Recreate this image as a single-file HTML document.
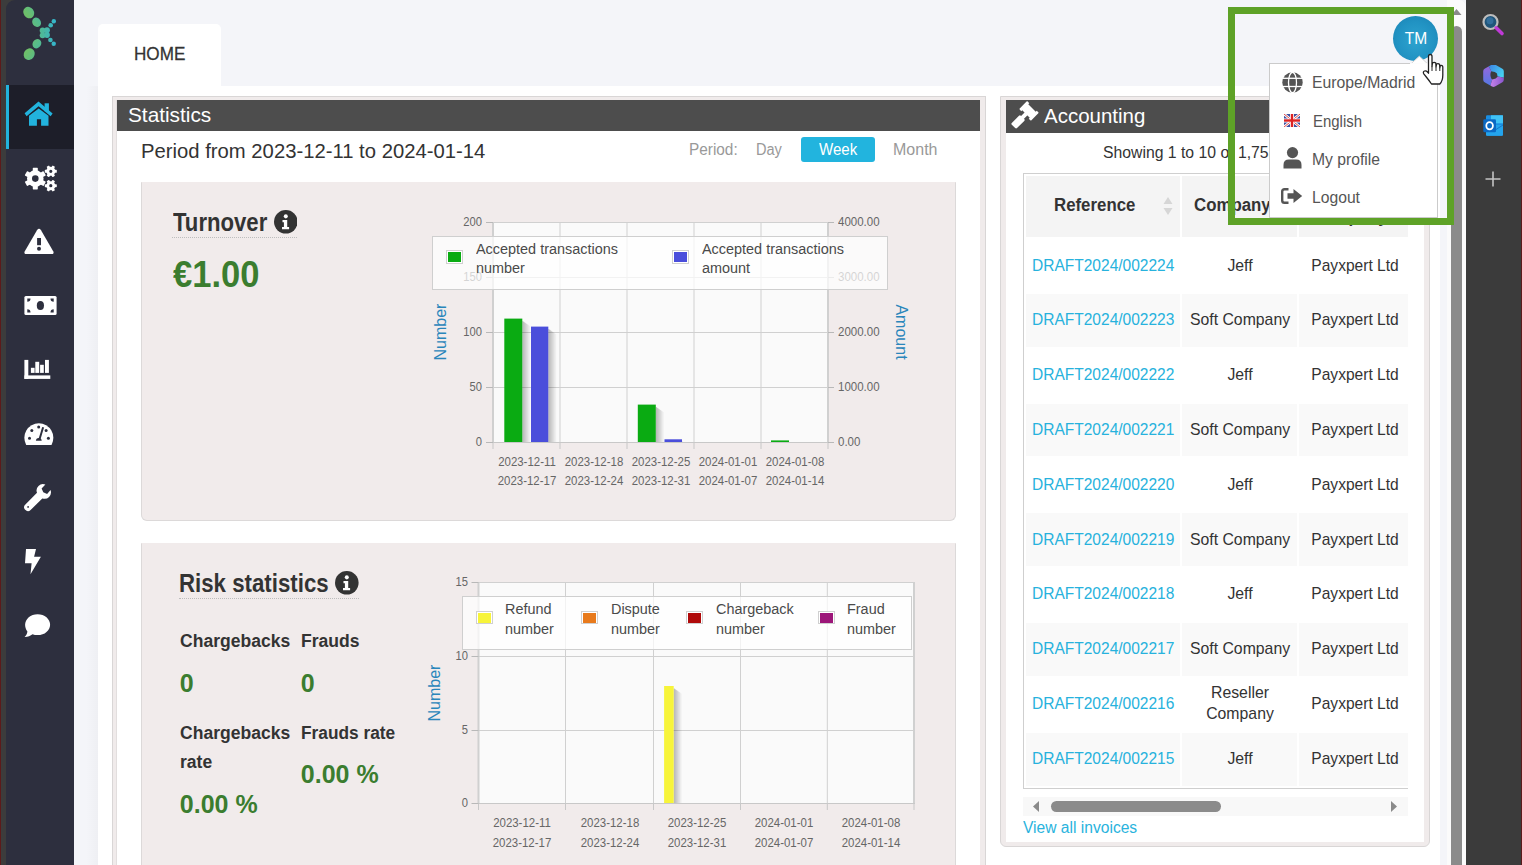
<!DOCTYPE html><html><head><meta charset="utf-8"><style>
html,body{margin:0;padding:0;}
body{width:1522px;height:865px;overflow:hidden;position:relative;background:#f4f5f9;font-family:"Liberation Sans",sans-serif;}
.t{position:absolute;white-space:nowrap;line-height:1;font-family:"Liberation Sans",sans-serif;}
div,svg{box-sizing:border-box;}
</style></head><body>
<div style="position:absolute;left:0px;top:0px;width:20px;height:865px;background:#3c3c3c"></div>
<div style="position:absolute;left:0px;top:0px;width:1px;height:865px;background:#5c1a1a"></div>
<div style="position:absolute;left:6px;top:0px;width:68px;height:865px;background:#2d2f3e;border-top-left-radius:9px"></div>
<div style="position:absolute;left:6px;top:85px;width:68px;height:64px;background:#1d1e29"></div>
<div style="position:absolute;left:6px;top:85px;width:3px;height:64px;background:#22b3dd"></div>
<svg style="position:absolute;left:0px;top:0px;" width="74" height="70" viewBox="0 0 74 70"><defs><linearGradient id="lg" gradientUnits="userSpaceOnUse" x1="26" y1="33" x2="56" y2="33">
<stop offset="0" stop-color="#6dbf6a"/><stop offset="0.55" stop-color="#4db99a"/><stop offset="1" stop-color="#33b5cf"/></linearGradient></defs>
<g fill="url(#lg)">
<ellipse cx="28.7" cy="12.6" rx="5.2" ry="6.0" transform="rotate(-35 28.7 12.6)"/>
<ellipse cx="36.6" cy="22.3" rx="4.2" ry="4.9" transform="rotate(-35 36.6 22.3)"/>
<circle cx="42.6" cy="30.5" r="2.9"/><circle cx="47.0" cy="30.2" r="2.9"/>
<circle cx="42.6" cy="35.3" r="2.9"/><circle cx="47.0" cy="35.0" r="2.9"/>
<ellipse cx="36.9" cy="43.7" rx="4.2" ry="4.9" transform="rotate(35 36.9 43.7)"/>
<ellipse cx="29.2" cy="54.1" rx="5.3" ry="6.0" transform="rotate(35 29.2 54.1)"/>
<circle cx="50.7" cy="25.3" r="2.3"/><circle cx="53.8" cy="21.2" r="2.2"/>
<circle cx="50.4" cy="40.0" r="2.3"/><circle cx="53.7" cy="43.7" r="2.2"/>
</g></svg>
<svg style="position:absolute;left:0px;top:0px;" width="74" height="660" viewBox="0 0 74 660"><g fill="#22b3dd">
<path d="M24.6 113.2 L38.5 101.6 L52.6 113.4 L50.6 116.3 L38.6 106.2 L26.6 116.2 Z"/>
<rect x="44.6" y="103.3" width="4.3" height="8"/>
<path d="M29 115.8 L38.7 108.4 L48.5 115.8 L48.5 125.8 L41.1 125.8 L41.1 119.3 L36.9 119.3 L36.9 125.8 L29 125.8 Z"/>
</g>
<g fill="#fff">
</g></svg>
<svg style="position:absolute;left:0px;top:0px;" width="74" height="660" viewBox="0 0 74 660"><g fill="#fff"><path fill-rule="evenodd" d="M26.999999999999996 178.6 a8.3 8.3 0 1 0 16.6 0 a8.3 8.3 0 1 0 -16.6 0 Z M31.999999999999996 178.6 a3.3 3.3 0 1 1 6.6 0 a3.3 3.3 0 1 1 -6.6 0 Z "/><rect x="32.80" y="167.80" width="5.0" height="4.00" rx="0.6" transform="rotate(0.0 35.3 178.6)"/><rect x="32.80" y="167.80" width="5.0" height="4.00" rx="0.6" transform="rotate(-60.0 35.3 178.6)"/><rect x="32.80" y="167.80" width="5.0" height="4.00" rx="0.6" transform="rotate(-120.0 35.3 178.6)"/><rect x="32.80" y="167.80" width="5.0" height="4.00" rx="0.6" transform="rotate(-180.0 35.3 178.6)"/><rect x="32.80" y="167.80" width="5.0" height="4.00" rx="0.6" transform="rotate(-240.0 35.3 178.6)"/><rect x="32.80" y="167.80" width="5.0" height="4.00" rx="0.6" transform="rotate(-300.0 35.3 178.6)"/><path fill-rule="evenodd" d="M46.3 171.3 a4.5 4.5 0 1 0 9.0 0 a4.5 4.5 0 1 0 -9.0 0 Z M49.199999999999996 171.3 a1.6 1.6 0 1 1 3.2 0 a1.6 1.6 0 1 1 -3.2 0 Z "/><rect x="49.35" y="165.30" width="2.9" height="3.00" rx="0.6" transform="rotate(90.0 50.8 171.3)"/><rect x="49.35" y="165.30" width="2.9" height="3.00" rx="0.6" transform="rotate(30.0 50.8 171.3)"/><rect x="49.35" y="165.30" width="2.9" height="3.00" rx="0.6" transform="rotate(-30.0 50.8 171.3)"/><rect x="49.35" y="165.30" width="2.9" height="3.00" rx="0.6" transform="rotate(-90.0 50.8 171.3)"/><rect x="49.35" y="165.30" width="2.9" height="3.00" rx="0.6" transform="rotate(-150.0 50.8 171.3)"/><rect x="49.35" y="165.30" width="2.9" height="3.00" rx="0.6" transform="rotate(-210.0 50.8 171.3)"/><path fill-rule="evenodd" d="M46.3 185.7 a4.5 4.5 0 1 0 9.0 0 a4.5 4.5 0 1 0 -9.0 0 Z M49.199999999999996 185.7 a1.6 1.6 0 1 1 3.2 0 a1.6 1.6 0 1 1 -3.2 0 Z "/><rect x="49.35" y="179.70" width="2.9" height="3.00" rx="0.6" transform="rotate(90.0 50.8 185.7)"/><rect x="49.35" y="179.70" width="2.9" height="3.00" rx="0.6" transform="rotate(30.0 50.8 185.7)"/><rect x="49.35" y="179.70" width="2.9" height="3.00" rx="0.6" transform="rotate(-30.0 50.8 185.7)"/><rect x="49.35" y="179.70" width="2.9" height="3.00" rx="0.6" transform="rotate(-90.0 50.8 185.7)"/><rect x="49.35" y="179.70" width="2.9" height="3.00" rx="0.6" transform="rotate(-150.0 50.8 185.7)"/><rect x="49.35" y="179.70" width="2.9" height="3.00" rx="0.6" transform="rotate(-210.0 50.8 185.7)"/><path d="M37 230.2 Q39 227.4 41 230.2 L53.2 251.2 Q54.6 254 51.6 254 L26.4 254 Q23.4 254 24.8 251.2 Z"/><rect x="37.1" y="238" width="3.9" height="7.2" fill="#2d2f3e"/><circle cx="39" cy="248.8" r="2" fill="#2d2f3e"/><rect x="24.4" y="295.9" width="32.2" height="19.2" rx="1.5"/><ellipse cx="40.4" cy="305.4" rx="3.6" ry="4.5" fill="#2d2f3e"/><path d="M27.3 298.6 h3.2 a3.2 3.2 0 0 1 -3.2 3.2 Z M53.7 298.6 h-3.2 a3.2 3.2 0 0 0 3.2 3.2 Z M27.3 312.4 h3.2 a3.2 3.2 0 0 0 -3.2 -3.2 Z M53.7 312.4 h-3.2 a3.2 3.2 0 0 1 3.2 -3.2 Z" fill="#2d2f3e"/><rect x="24.4" y="359.9" width="3.9" height="19"/><rect x="24.4" y="375.4" width="25.9" height="3.5"/><rect x="30.9" y="367.8" width="3.7" height="5.1"/><rect x="35.3" y="361.8" width="3.9" height="11.1"/><rect x="40.1" y="364.8" width="3.7" height="8.1"/><rect x="45" y="359.9" width="3.9" height="13"/><path d="M26.2 444.9 A14.5 14.5 0 1 1 51.5 444.9 Z"/><g fill="#2d2f3e"><circle cx="29.5" cy="438.2" r="1.5"/><circle cx="31.8" cy="430.4" r="1.5"/><circle cx="38.7" cy="427.1" r="1.5"/><circle cx="46.1" cy="430.4" r="1.5"/><circle cx="48.4" cy="438.2" r="1.5"/><path d="M42.2 427 L44.1 427.6 L40.4 439.6 L38.5 439 Z"/><path d="M35.9 440.8 A2.9 2.9 0 0 1 41.7 440.8 Z"/></g><path d="M25.4 504.4 L37 492.8 A6.4 6.4 0 0 1 45.4 484.6 L41.6 488.5 L43.3 492.3 L47.1 494 L50.5 490.1 A6.4 6.4 0 0 1 42.3 498.4 L30.6 510 A3.6 3.6 0 0 1 25.4 504.4 Z"/><circle cx="28.1" cy="506.9" r="0.9" fill="#2d2f3e"/><path d="M26 548.9 L36 548.9 L34.1 556.8 L40.9 556.8 L30.5 574.2 L31.6 563.2 L25 563.2 Z"/><path d="M37.6 614.2 C44.6 614.2 50.1 618.9 50.1 624.7 C50.1 630.5 44.6 635.1 37.6 635.1 C35.8 635.1 34 634.8 32.5 634.2 C30.5 635.7 27.6 637 24.6 636.9 C26.2 635.3 27.2 633.4 27.4 631.4 C25.9 629.6 25.1 627.2 25.1 624.7 C25.1 618.9 30.6 614.2 37.6 614.2 Z"/></g></svg>
<div style="position:absolute;left:74px;top:0px;width:1392px;height:865px;background:#f4f5f9;border-top-right-radius:7px"></div>
<div style="position:absolute;left:1466px;top:0px;width:56px;height:865px;background:#3b3b3b"></div>
<div style="position:absolute;left:1521px;top:0px;width:1px;height:865px;background:#5c1a1a"></div>
<div style="position:absolute;left:1440px;top:0;width:26px;height:865px;background:#f4f5f9;border-top-right-radius:7px"></div>
<div style="position:absolute;left:1447px;top:0;width:19px;height:865px;background:#fbfbfb;border-top-right-radius:7px"></div>
<svg style="position:absolute;left:1450px;top:6px;" width="14" height="10" viewBox="0 0 14 10"><path d="M1.5 9 L6.5 3 L11.5 9 Z" fill="#8a8a8a"/></svg>
<div style="position:absolute;left:1451px;top:26px;width:11px;height:874px;background:#8b8b8b;border-radius:5.5px"></div>
<div style="position:absolute;left:86px;top:86px;width:12px;height:779px;background:linear-gradient(to right,rgba(0,0,0,0),rgba(0,0,0,0.025))"></div>
<div style="position:absolute;left:98px;top:86px;width:1342px;height:779px;background:#fff"></div>
<div style="position:absolute;left:98px;top:24px;width:123px;height:66px;background:#fff;border-radius:5px 5px 0 0"></div>
<div class="t" style="left:134.4px;top:44.3px;font-size:19px;color:#333;transform:scaleX(0.9);transform-origin:0 0;-webkit-text-stroke:0.3px #333;">HOME</div>
<div style="position:absolute;left:112px;top:96px;width:874px;height:804px;background:#f0ebeb;border:1px solid #d9d6d6;border-bottom:none"></div>
<div style="position:absolute;left:116px;top:100px;width:1px;height:800px;background:#e2dede"></div>
<div style="position:absolute;left:117px;top:100px;width:863px;height:31px;background:#4d4d4d"></div>
<div style="position:absolute;left:117px;top:131px;width:863px;height:769px;background:#fff"></div>
<div class="t" style="left:128.0px;top:104.1px;font-size:21px;color:#fff;transform:scaleX(0.99);transform-origin:0 0;">Statistics</div>
<div class="t" style="left:141.0px;top:141.1px;font-size:20px;color:#333;transform:scaleX(1.013);transform-origin:0 0;">Period from 2023-12-11 to 2024-01-14</div>
<div class="t" style="left:689.2px;top:142.4px;font-size:16px;color:#999;transform:scaleX(0.96);transform-origin:0 0;">Period:</div>
<div class="t" style="left:756.2px;top:142.4px;font-size:16px;color:#999;transform:scaleX(0.91);transform-origin:0 0;">Day</div>
<div style="position:absolute;left:801px;top:137px;width:74px;height:25px;background:#22b4de;border-radius:3px"></div>
<div class="t" style="left:818.6px;top:142.4px;font-size:16px;color:#fff;transform:scaleX(0.94);transform-origin:0 0;">Week</div>
<div class="t" style="left:893.0px;top:142.4px;font-size:16px;color:#999;">Month</div>
<div style="position:absolute;left:141px;top:182px;width:815px;height:339px;background:#f1ebeb;border:1px solid #dcd9d9;border-top-color:#f1ebeb;border-radius:0 0 6px 6px"></div>
<div class="t" style="left:172.5px;top:210.2px;font-size:25px;color:#333;font-weight:bold;transform:scaleX(0.885);transform-origin:0 0;">Turnover</div>
<svg style="position:absolute;left:273.5px;top:210px;" width="23.6" height="23.6" viewBox="0 0 23.6 23.6"><circle cx="11.8" cy="11.8" r="11.8" fill="#333"/><circle cx="11.8" cy="6.372000000000001" r="2.0060000000000002" fill="#fff"/><path d="M8.496 9.912 h4.720000000000001 v7.08 h1.8880000000000001 v2.3600000000000003 h-7.08 v-2.3600000000000003 h1.8880000000000001 v-4.720000000000001 h-1.416 Z" fill="#fff"/></svg>
<div style="position:absolute;left:172px;top:237px;width:125px;height:0;border-top:1px dotted #bdbdbd"></div>
<div class="t" style="left:173.0px;top:257.0px;font-size:36px;color:#3b7d2f;font-weight:bold;transform:scaleX(0.96);transform-origin:0 0;">&euro;1.00</div>
<div style="position:absolute;left:493px;top:222px;width:335px;height:220px;background:#fafafa"></div>
<svg style="position:absolute;left:0px;top:0px;pointer-events:none" width="1000" height="865" viewBox="0 0 1000 865"><rect x="559.5" y="222" width="1" height="220" fill="#d0d0d0"/><rect x="626.5" y="222" width="1" height="220" fill="#d0d0d0"/><rect x="693.5" y="222" width="1" height="220" fill="#d0d0d0"/><rect x="760.5" y="222" width="1" height="220" fill="#d0d0d0"/><rect x="493" y="222" width="335" height="1" fill="#d0d0d0"/><rect x="493" y="277" width="335" height="1" fill="#d0d0d0"/><rect x="493" y="332" width="335" height="1" fill="#d0d0d0"/><rect x="493" y="387" width="335" height="1" fill="#d0d0d0"/><rect x="493" y="442" width="335" height="1" fill="#d0d0d0"/><rect x="492" y="222" width="2" height="221" fill="#d0d0d0"/><rect x="827" y="222" width="2" height="221" fill="#d0d0d0"/><rect x="492" y="442" width="337" height="1" fill="#c8c8c8"/><rect x="493" y="222" width="335" height="1" fill="#d0d0d0"/><rect x="486" y="222" width="7" height="1" fill="#b8b8b8"/><rect x="828" y="222" width="6" height="1" fill="#b8b8b8"/><rect x="486" y="277" width="7" height="1" fill="#b8b8b8"/><rect x="828" y="277" width="6" height="1" fill="#b8b8b8"/><rect x="486" y="332" width="7" height="1" fill="#b8b8b8"/><rect x="828" y="332" width="6" height="1" fill="#b8b8b8"/><rect x="486" y="387" width="7" height="1" fill="#b8b8b8"/><rect x="828" y="387" width="6" height="1" fill="#b8b8b8"/><rect x="486" y="442" width="7" height="1" fill="#b8b8b8"/><rect x="828" y="442" width="6" height="1" fill="#b8b8b8"/><rect x="492.5" y="443" width="1" height="6" fill="#c8c8c8"/><rect x="559.5" y="443" width="1" height="6" fill="#c8c8c8"/><rect x="626.5" y="443" width="1" height="6" fill="#c8c8c8"/><rect x="693.5" y="443" width="1" height="6" fill="#c8c8c8"/><rect x="760.5" y="443" width="1" height="6" fill="#c8c8c8"/><rect x="827.5" y="443" width="1" height="6" fill="#c8c8c8"/><rect x="522.3" y="321.1" width="1" height="120.9" fill="#000" fill-opacity="0.270"/><rect x="523.3" y="321.8" width="1" height="120.2" fill="#000" fill-opacity="0.236"/><rect x="524.3" y="322.5" width="1" height="119.5" fill="#000" fill-opacity="0.203"/><rect x="525.3" y="323.2" width="1" height="118.8" fill="#000" fill-opacity="0.169"/><rect x="526.3" y="323.9" width="1" height="118.1" fill="#000" fill-opacity="0.135"/><rect x="527.3" y="324.6" width="1" height="117.4" fill="#000" fill-opacity="0.101"/><rect x="528.3" y="325.3" width="1" height="116.7" fill="#000" fill-opacity="0.068"/><rect x="529.3" y="326.0" width="1" height="116.0" fill="#000" fill-opacity="0.034"/><rect x="504.3" y="318.6" width="18.0" height="123.4" fill="#0aab12"/><rect x="548.3" y="329.1" width="1" height="112.9" fill="#000" fill-opacity="0.270"/><rect x="549.3" y="329.8" width="1" height="112.2" fill="#000" fill-opacity="0.236"/><rect x="550.3" y="330.5" width="1" height="111.5" fill="#000" fill-opacity="0.203"/><rect x="551.3" y="331.2" width="1" height="110.8" fill="#000" fill-opacity="0.169"/><rect x="552.3" y="331.9" width="1" height="110.1" fill="#000" fill-opacity="0.135"/><rect x="553.3" y="332.6" width="1" height="109.4" fill="#000" fill-opacity="0.101"/><rect x="554.3" y="333.3" width="1" height="108.7" fill="#000" fill-opacity="0.068"/><rect x="555.3" y="334.0" width="1" height="108.0" fill="#000" fill-opacity="0.034"/><rect x="531.0" y="326.6" width="17.3" height="115.4" fill="#4a4edb"/><rect x="655.8" y="407.1" width="1" height="34.9" fill="#000" fill-opacity="0.270"/><rect x="656.8" y="407.8" width="1" height="34.2" fill="#000" fill-opacity="0.236"/><rect x="657.8" y="408.5" width="1" height="33.5" fill="#000" fill-opacity="0.203"/><rect x="658.8" y="409.2" width="1" height="32.8" fill="#000" fill-opacity="0.169"/><rect x="659.8" y="409.9" width="1" height="32.1" fill="#000" fill-opacity="0.135"/><rect x="660.8" y="410.6" width="1" height="31.4" fill="#000" fill-opacity="0.101"/><rect x="661.8" y="411.3" width="1" height="30.7" fill="#000" fill-opacity="0.068"/><rect x="662.8" y="412.0" width="1" height="30.0" fill="#000" fill-opacity="0.034"/><rect x="637.8" y="404.6" width="18.0" height="37.4" fill="#0aab12"/><rect x="682.0" y="441.8" width="1" height="0.2" fill="#000" fill-opacity="0.270"/><rect x="683.0" y="442.5" width="1" height="0.0" fill="#000" fill-opacity="0.236"/><rect x="684.0" y="443.2" width="1" height="0.0" fill="#000" fill-opacity="0.203"/><rect x="685.0" y="443.9" width="1" height="0.0" fill="#000" fill-opacity="0.169"/><rect x="686.0" y="444.6" width="1" height="0.0" fill="#000" fill-opacity="0.135"/><rect x="687.0" y="445.3" width="1" height="0.0" fill="#000" fill-opacity="0.101"/><rect x="688.0" y="446.0" width="1" height="0.0" fill="#000" fill-opacity="0.068"/><rect x="689.0" y="446.7" width="1" height="0.0" fill="#000" fill-opacity="0.034"/><rect x="664.5" y="439.3" width="17.5" height="2.7" fill="#4a4edb"/><rect x="789.0" y="442.9" width="1" height="0.0" fill="#000" fill-opacity="0.270"/><rect x="790.0" y="443.6" width="1" height="0.0" fill="#000" fill-opacity="0.236"/><rect x="791.0" y="444.3" width="1" height="0.0" fill="#000" fill-opacity="0.203"/><rect x="792.0" y="445.0" width="1" height="0.0" fill="#000" fill-opacity="0.169"/><rect x="793.0" y="445.7" width="1" height="0.0" fill="#000" fill-opacity="0.135"/><rect x="794.0" y="446.4" width="1" height="0.0" fill="#000" fill-opacity="0.101"/><rect x="795.0" y="447.1" width="1" height="0.0" fill="#000" fill-opacity="0.068"/><rect x="796.0" y="447.8" width="1" height="0.0" fill="#000" fill-opacity="0.034"/><rect x="771.0" y="440.4" width="18.0" height="1.6" fill="#0aab12"/></svg>
<div class="t" style="left:482.0px;top:214.9px;font-size:13px;color:#666;transform:translateX(-100%) scaleX(0.86);transform-origin:100% 0;">200</div>
<div class="t" style="left:482.0px;top:269.9px;font-size:13px;color:#666;transform:translateX(-100%) scaleX(0.86);transform-origin:100% 0;">150</div>
<div class="t" style="left:482.0px;top:324.9px;font-size:13px;color:#666;transform:translateX(-100%) scaleX(0.86);transform-origin:100% 0;">100</div>
<div class="t" style="left:482.0px;top:379.9px;font-size:13px;color:#666;transform:translateX(-100%) scaleX(0.86);transform-origin:100% 0;">50</div>
<div class="t" style="left:482.0px;top:434.9px;font-size:13px;color:#666;transform:translateX(-100%) scaleX(0.86);transform-origin:100% 0;">0</div>
<div class="t" style="left:837.5px;top:214.9px;font-size:13px;color:#666;transform:scaleX(0.885);transform-origin:0 0;">4000.00</div>
<div class="t" style="left:837.5px;top:269.9px;font-size:13px;color:#666;transform:scaleX(0.885);transform-origin:0 0;">3000.00</div>
<div class="t" style="left:837.5px;top:324.9px;font-size:13px;color:#666;transform:scaleX(0.885);transform-origin:0 0;">2000.00</div>
<div class="t" style="left:837.5px;top:379.9px;font-size:13px;color:#666;transform:scaleX(0.885);transform-origin:0 0;">1000.00</div>
<div class="t" style="left:837.5px;top:434.9px;font-size:13px;color:#666;transform:scaleX(0.885);transform-origin:0 0;">0.00</div>
<div class="t" style="left:526.5px;top:455.4px;font-size:13px;color:#666;transform:translateX(-50%) scaleX(0.88);transform-origin:50% 0;">2023-12-11</div>
<div class="t" style="left:526.5px;top:473.6px;font-size:13px;color:#666;transform:translateX(-50%) scaleX(0.88);transform-origin:50% 0;">2023-12-17</div>
<div class="t" style="left:593.5px;top:455.4px;font-size:13px;color:#666;transform:translateX(-50%) scaleX(0.88);transform-origin:50% 0;">2023-12-18</div>
<div class="t" style="left:593.5px;top:473.6px;font-size:13px;color:#666;transform:translateX(-50%) scaleX(0.88);transform-origin:50% 0;">2023-12-24</div>
<div class="t" style="left:660.5px;top:455.4px;font-size:13px;color:#666;transform:translateX(-50%) scaleX(0.88);transform-origin:50% 0;">2023-12-25</div>
<div class="t" style="left:660.5px;top:473.6px;font-size:13px;color:#666;transform:translateX(-50%) scaleX(0.88);transform-origin:50% 0;">2023-12-31</div>
<div class="t" style="left:727.5px;top:455.4px;font-size:13px;color:#666;transform:translateX(-50%) scaleX(0.88);transform-origin:50% 0;">2024-01-01</div>
<div class="t" style="left:727.5px;top:473.6px;font-size:13px;color:#666;transform:translateX(-50%) scaleX(0.88);transform-origin:50% 0;">2024-01-07</div>
<div class="t" style="left:794.5px;top:455.4px;font-size:13px;color:#666;transform:translateX(-50%) scaleX(0.88);transform-origin:50% 0;">2024-01-08</div>
<div class="t" style="left:794.5px;top:473.6px;font-size:13px;color:#666;transform:translateX(-50%) scaleX(0.88);transform-origin:50% 0;">2024-01-14</div>
<div style="position:absolute;left:432px;top:235.5px;width:455.5px;height:54.0px;background:rgba(255,255,255,0.72);border:1px solid #cfcfcf"></div>
<div style="position:absolute;left:446px;top:250.0px;width:17px;height:13.5px;background:#fff;border:1px solid #d0d0d0;padding:1.5px 2px"></div>
<div style="position:absolute;left:448px;top:251.8px;width:13px;height:10.099999999999966px;background:#0aab12"></div>
<div class="t" style="left:476.2px;top:241.5px;font-size:14px;color:#4a4a4a;transform:scaleX(1.03);transform-origin:0 0;">Accepted transactions</div>
<div class="t" style="left:476.2px;top:261.3px;font-size:14px;color:#4a4a4a;transform:scaleX(1.03);transform-origin:0 0;">number</div>
<div style="position:absolute;left:672.4px;top:250.0px;width:17.0px;height:13.5px;background:#fff;border:1px solid #d0d0d0;padding:1.5px 2px"></div>
<div style="position:absolute;left:674.4px;top:251.8px;width:13.0px;height:10.099999999999966px;background:#4a4edb"></div>
<div class="t" style="left:701.9px;top:241.5px;font-size:14px;color:#4a4a4a;transform:scaleX(1.03);transform-origin:0 0;">Accepted transactions</div>
<div class="t" style="left:701.9px;top:261.3px;font-size:14px;color:#4a4a4a;transform:scaleX(1.03);transform-origin:0 0;">amount</div>
<div class="t" style="left:441px;top:332px;font-size:16px;color:#2a86bb;transform:translate(-50%,-50%) rotate(-90deg)">Number</div>
<div class="t" style="left:900.5px;top:332px;font-size:16px;color:#2a86bb;transform:translate(-50%,-50%) rotate(90deg)">Amount</div>
<div style="position:absolute;left:141px;top:543px;width:815px;height:357px;background:#f1ebeb;border:1px solid #dcd9d9;border-top-color:#f1ebeb"></div>
<div class="t" style="left:179.2px;top:570.7px;font-size:25px;color:#333;font-weight:bold;transform:scaleX(0.89);transform-origin:0 0;">Risk statistics</div>
<svg style="position:absolute;left:335.4px;top:571px;" width="23.6" height="23.6" viewBox="0 0 23.6 23.6"><circle cx="11.8" cy="11.8" r="11.8" fill="#333"/><circle cx="11.8" cy="6.372000000000001" r="2.0060000000000002" fill="#fff"/><path d="M8.496 9.912 h4.720000000000001 v7.08 h1.8880000000000001 v2.3600000000000003 h-7.08 v-2.3600000000000003 h1.8880000000000001 v-4.720000000000001 h-1.416 Z" fill="#fff"/></svg>
<div style="position:absolute;left:179px;top:598px;width:180px;height:0;border-top:1px dotted #bdbdbd"></div>
<div class="t" style="left:179.8px;top:631.5px;font-size:18px;color:#333;font-weight:bold;transform:scaleX(0.975);transform-origin:0 0;">Chargebacks</div>
<div class="t" style="left:300.8px;top:631.5px;font-size:18px;color:#333;font-weight:bold;transform:scaleX(0.975);transform-origin:0 0;">Frauds</div>
<div class="t" style="left:179.8px;top:670.6px;font-size:25px;color:#3b7d2f;font-weight:bold;">0</div>
<div class="t" style="left:300.8px;top:670.6px;font-size:25px;color:#3b7d2f;font-weight:bold;">0</div>
<div class="t" style="left:179.8px;top:723.8px;font-size:18px;color:#333;font-weight:bold;transform:scaleX(0.975);transform-origin:0 0;">Chargebacks</div>
<div class="t" style="left:179.8px;top:753.0px;font-size:18px;color:#333;font-weight:bold;transform:scaleX(0.975);transform-origin:0 0;">rate</div>
<div class="t" style="left:300.8px;top:723.8px;font-size:18px;color:#333;font-weight:bold;transform:scaleX(0.96);transform-origin:0 0;">Frauds rate</div>
<div class="t" style="left:300.8px;top:762.1px;font-size:25px;color:#3b7d2f;font-weight:bold;">0.00 %</div>
<div class="t" style="left:179.8px;top:792.0px;font-size:25px;color:#3b7d2f;font-weight:bold;">0.00 %</div>
<div style="position:absolute;left:478.5px;top:582px;width:435.5px;height:221px;background:#fafafa"></div>
<svg style="position:absolute;left:0px;top:0px;pointer-events:none" width="1000" height="865" viewBox="0 0 1000 865"><rect x="565.0" y="582" width="1" height="221" fill="#d0d0d0"/><rect x="653.0" y="582" width="1" height="221" fill="#d0d0d0"/><rect x="740.0" y="582" width="1" height="221" fill="#d0d0d0"/><rect x="826.8" y="582" width="1" height="221" fill="#d0d0d0"/><rect x="478.5" y="582" width="435.5" height="1" fill="#d0d0d0"/><rect x="478.5" y="656" width="435.5" height="1" fill="#d0d0d0"/><rect x="478.5" y="730" width="435.5" height="1" fill="#d0d0d0"/><rect x="478.5" y="803" width="435.5" height="1" fill="#d0d0d0"/><rect x="477.5" y="582" width="2" height="222" fill="#d0d0d0"/><rect x="913" y="582" width="2" height="222" fill="#d0d0d0"/><rect x="477.5" y="803" width="437.5" height="1" fill="#c8c8c8"/><rect x="478.5" y="582" width="435.5" height="1" fill="#d0d0d0"/><rect x="471.5" y="582" width="7" height="1" fill="#b8b8b8"/><rect x="471.5" y="656" width="7" height="1" fill="#b8b8b8"/><rect x="471.5" y="730" width="7" height="1" fill="#b8b8b8"/><rect x="471.5" y="803" width="7" height="1" fill="#b8b8b8"/><rect x="478.0" y="804" width="1" height="6" fill="#c8c8c8"/><rect x="565.0" y="804" width="1" height="6" fill="#c8c8c8"/><rect x="653.0" y="804" width="1" height="6" fill="#c8c8c8"/><rect x="740.0" y="804" width="1" height="6" fill="#c8c8c8"/><rect x="826.8" y="804" width="1" height="6" fill="#c8c8c8"/><rect x="913.5" y="804" width="1" height="6" fill="#c8c8c8"/><rect x="673.7" y="688.5" width="1" height="114.5" fill="#000" fill-opacity="0.270"/><rect x="674.7" y="689.2" width="1" height="113.8" fill="#000" fill-opacity="0.236"/><rect x="675.7" y="689.9" width="1" height="113.1" fill="#000" fill-opacity="0.203"/><rect x="676.7" y="690.6" width="1" height="112.4" fill="#000" fill-opacity="0.169"/><rect x="677.7" y="691.3" width="1" height="111.7" fill="#000" fill-opacity="0.135"/><rect x="678.7" y="692.0" width="1" height="111.0" fill="#000" fill-opacity="0.101"/><rect x="679.7" y="692.7" width="1" height="110.3" fill="#000" fill-opacity="0.068"/><rect x="680.7" y="693.4" width="1" height="109.6" fill="#000" fill-opacity="0.034"/><rect x="664.1" y="686.0" width="9.6" height="117.0" fill="#f7f43a"/></svg>
<div class="t" style="left:467.5px;top:574.9px;font-size:13px;color:#666;transform:translateX(-100%) scaleX(0.86);transform-origin:100% 0;">15</div>
<div class="t" style="left:467.5px;top:648.9px;font-size:13px;color:#666;transform:translateX(-100%) scaleX(0.86);transform-origin:100% 0;">10</div>
<div class="t" style="left:467.5px;top:722.9px;font-size:13px;color:#666;transform:translateX(-100%) scaleX(0.86);transform-origin:100% 0;">5</div>
<div class="t" style="left:467.5px;top:795.9px;font-size:13px;color:#666;transform:translateX(-100%) scaleX(0.86);transform-origin:100% 0;">0</div>
<div class="t" style="left:522.0px;top:816.1px;font-size:13px;color:#666;transform:translateX(-50%) scaleX(0.88);transform-origin:50% 0;">2023-12-11</div>
<div class="t" style="left:522.0px;top:835.6px;font-size:13px;color:#666;transform:translateX(-50%) scaleX(0.88);transform-origin:50% 0;">2023-12-17</div>
<div class="t" style="left:609.5px;top:816.1px;font-size:13px;color:#666;transform:translateX(-50%) scaleX(0.88);transform-origin:50% 0;">2023-12-18</div>
<div class="t" style="left:609.5px;top:835.6px;font-size:13px;color:#666;transform:translateX(-50%) scaleX(0.88);transform-origin:50% 0;">2023-12-24</div>
<div class="t" style="left:697.0px;top:816.1px;font-size:13px;color:#666;transform:translateX(-50%) scaleX(0.88);transform-origin:50% 0;">2023-12-25</div>
<div class="t" style="left:697.0px;top:835.6px;font-size:13px;color:#666;transform:translateX(-50%) scaleX(0.88);transform-origin:50% 0;">2023-12-31</div>
<div class="t" style="left:783.9px;top:816.1px;font-size:13px;color:#666;transform:translateX(-50%) scaleX(0.88);transform-origin:50% 0;">2024-01-01</div>
<div class="t" style="left:783.9px;top:835.6px;font-size:13px;color:#666;transform:translateX(-50%) scaleX(0.88);transform-origin:50% 0;">2024-01-07</div>
<div class="t" style="left:870.6px;top:816.1px;font-size:13px;color:#666;transform:translateX(-50%) scaleX(0.88);transform-origin:50% 0;">2024-01-08</div>
<div class="t" style="left:870.6px;top:835.6px;font-size:13px;color:#666;transform:translateX(-50%) scaleX(0.88);transform-origin:50% 0;">2024-01-14</div>
<div style="position:absolute;left:461.5px;top:596.2px;width:450.0px;height:54.299999999999955px;background:rgba(255,255,255,0.72);border:1px solid #cfcfcf"></div>
<div style="position:absolute;left:476px;top:610.7px;width:17px;height:13.5px;background:#fff;border:1px solid #d0d0d0;padding:1.5px 2px"></div>
<div style="position:absolute;left:478px;top:612.5px;width:13px;height:10.100000000000023px;background:#f7f43a"></div>
<div class="t" style="left:505.2px;top:602.2px;font-size:14px;color:#4a4a4a;transform:scaleX(1.03);transform-origin:0 0;">Refund</div>
<div class="t" style="left:505.2px;top:622.0px;font-size:14px;color:#4a4a4a;transform:scaleX(1.03);transform-origin:0 0;">number</div>
<div style="position:absolute;left:581.4px;top:610.7px;width:17.0px;height:13.5px;background:#fff;border:1px solid #d0d0d0;padding:1.5px 2px"></div>
<div style="position:absolute;left:583.4px;top:612.5px;width:13.0px;height:10.100000000000023px;background:#e87a1c"></div>
<div class="t" style="left:610.5px;top:602.2px;font-size:14px;color:#4a4a4a;transform:scaleX(1.03);transform-origin:0 0;">Dispute</div>
<div class="t" style="left:610.5px;top:622.0px;font-size:14px;color:#4a4a4a;transform:scaleX(1.03);transform-origin:0 0;">number</div>
<div style="position:absolute;left:686px;top:610.7px;width:17px;height:13.5px;background:#fff;border:1px solid #d0d0d0;padding:1.5px 2px"></div>
<div style="position:absolute;left:688px;top:612.5px;width:13px;height:10.100000000000023px;background:#b00a0a"></div>
<div class="t" style="left:715.5px;top:602.2px;font-size:14px;color:#4a4a4a;transform:scaleX(1.03);transform-origin:0 0;">Chargeback</div>
<div class="t" style="left:715.5px;top:622.0px;font-size:14px;color:#4a4a4a;transform:scaleX(1.03);transform-origin:0 0;">number</div>
<div style="position:absolute;left:818px;top:610.7px;width:17px;height:13.5px;background:#fff;border:1px solid #d0d0d0;padding:1.5px 2px"></div>
<div style="position:absolute;left:820px;top:612.5px;width:13px;height:10.100000000000023px;background:#9c1679"></div>
<div class="t" style="left:846.8px;top:602.2px;font-size:14px;color:#4a4a4a;transform:scaleX(1.03);transform-origin:0 0;">Fraud</div>
<div class="t" style="left:846.8px;top:622.0px;font-size:14px;color:#4a4a4a;transform:scaleX(1.03);transform-origin:0 0;">number</div>
<div class="t" style="left:434.5px;top:693px;font-size:16px;color:#2a86bb;transform:translate(-50%,-50%) rotate(-90deg)">Number</div>
<div style="position:absolute;left:1000px;top:96px;width:430px;height:750.5px;background:#f0ebeb;border:1px solid #d9d6d6;border-radius:0 0 6px 6px"></div>
<div style="position:absolute;left:1006px;top:100px;width:418px;height:32.599999999999994px;background:#4d4d4d"></div>
<div style="position:absolute;left:1006px;top:132.6px;width:418px;height:709.8px;background:#fff"></div>
<svg style="position:absolute;left:1008px;top:98px;" width="34" height="34" viewBox="0 0 34 34"><g fill="#fff" transform="translate(25 8.9) rotate(45)">
<path d="M-8.3 0.8 Q-8.3 0 -7.5 0 L-5.3 0 L-5.3 1.4 L5.3 1.4 L5.3 0 L7.5 0 Q8.3 0 8.3 0.8 L8.3 10.5 Q8.3 11.3 7.5 11.3 L5.3 11.3 L5.3 9.9 L-5.3 9.9 L-5.3 11.3 L-7.5 11.3 Q-8.3 11.3 -8.3 10.5 Z"/>
<rect x="-2.1" y="9.5" width="4.2" height="6"/>
<rect x="-3.7" y="14.8" width="7.4" height="12.8" rx="1.3"/>
</g></svg>
<div class="t" style="left:1044.0px;top:105.2px;font-size:21px;color:#fff;transform:scaleX(0.975);transform-origin:0 0;">Accounting</div>
<div class="t" style="left:1103.0px;top:145.0px;font-size:16px;color:#333;transform:scaleX(0.985);transform-origin:0 0;">Showing 1 to 10 of 1,753 entries</div>
<div style="position:absolute;left:1023px;top:173px;width:385px;height:616px;overflow:hidden">
<div style="position:absolute;left:0;top:0;width:420px;height:615.8px;border:1px solid #cfcfcf;box-sizing:border-box"></div>
<div style="position:absolute;left:3.0px;top:2.8px;width:154.0px;height:60.8px;background:#f4f4f4"></div>
<div style="position:absolute;left:159.0px;top:2.8px;width:115.0px;height:60.8px;background:#f4f4f4"></div>
<div style="position:absolute;left:276.0px;top:2.8px;width:121.0px;height:60.8px;background:#f4f4f4"></div>
<div style="position:absolute;left:3.0px;top:65.8px;width:154.0px;height:52.9px;background:#ffffff"></div>
<div style="position:absolute;left:159.0px;top:65.8px;width:115.0px;height:52.9px;background:#ffffff"></div>
<div style="position:absolute;left:276.0px;top:65.8px;width:121.0px;height:52.9px;background:#ffffff"></div>
<div style="position:absolute;left:3.0px;top:120.7px;width:154.0px;height:52.9px;background:#f9f9f9"></div>
<div style="position:absolute;left:159.0px;top:120.7px;width:115.0px;height:52.9px;background:#f9f9f9"></div>
<div style="position:absolute;left:276.0px;top:120.7px;width:121.0px;height:52.9px;background:#f9f9f9"></div>
<div style="position:absolute;left:3.0px;top:175.6px;width:154.0px;height:52.9px;background:#ffffff"></div>
<div style="position:absolute;left:159.0px;top:175.6px;width:115.0px;height:52.9px;background:#ffffff"></div>
<div style="position:absolute;left:276.0px;top:175.6px;width:121.0px;height:52.9px;background:#ffffff"></div>
<div style="position:absolute;left:3.0px;top:230.5px;width:154.0px;height:52.9px;background:#f9f9f9"></div>
<div style="position:absolute;left:159.0px;top:230.5px;width:115.0px;height:52.9px;background:#f9f9f9"></div>
<div style="position:absolute;left:276.0px;top:230.5px;width:121.0px;height:52.9px;background:#f9f9f9"></div>
<div style="position:absolute;left:3.0px;top:285.4px;width:154.0px;height:52.9px;background:#ffffff"></div>
<div style="position:absolute;left:159.0px;top:285.4px;width:115.0px;height:52.9px;background:#ffffff"></div>
<div style="position:absolute;left:276.0px;top:285.4px;width:121.0px;height:52.9px;background:#ffffff"></div>
<div style="position:absolute;left:3.0px;top:340.3px;width:154.0px;height:52.9px;background:#f9f9f9"></div>
<div style="position:absolute;left:159.0px;top:340.3px;width:115.0px;height:52.9px;background:#f9f9f9"></div>
<div style="position:absolute;left:276.0px;top:340.3px;width:121.0px;height:52.9px;background:#f9f9f9"></div>
<div style="position:absolute;left:3.0px;top:395.2px;width:154.0px;height:52.9px;background:#ffffff"></div>
<div style="position:absolute;left:159.0px;top:395.2px;width:115.0px;height:52.9px;background:#ffffff"></div>
<div style="position:absolute;left:276.0px;top:395.2px;width:121.0px;height:52.9px;background:#ffffff"></div>
<div style="position:absolute;left:3.0px;top:450.1px;width:154.0px;height:52.9px;background:#f9f9f9"></div>
<div style="position:absolute;left:159.0px;top:450.1px;width:115.0px;height:52.9px;background:#f9f9f9"></div>
<div style="position:absolute;left:276.0px;top:450.1px;width:121.0px;height:52.9px;background:#f9f9f9"></div>
<div style="position:absolute;left:3.0px;top:505.0px;width:154.0px;height:52.9px;background:#ffffff"></div>
<div style="position:absolute;left:159.0px;top:505.0px;width:115.0px;height:52.9px;background:#ffffff"></div>
<div style="position:absolute;left:276.0px;top:505.0px;width:121.0px;height:52.9px;background:#ffffff"></div>
<div style="position:absolute;left:3.0px;top:559.9px;width:154.0px;height:52.9px;background:#f9f9f9"></div>
<div style="position:absolute;left:159.0px;top:559.9px;width:115.0px;height:52.9px;background:#f9f9f9"></div>
<div style="position:absolute;left:276.0px;top:559.9px;width:121.0px;height:52.9px;background:#f9f9f9"></div>
</div>
<div class="t" style="left:1031.8px;top:256.6px;font-size:17px;color:#27b2dd;transform:scaleX(0.913);transform-origin:0 0;">DRAFT2024/002224</div>
<div class="t" style="left:1239.5px;top:256.6px;font-size:17px;color:#333;transform:translateX(-50%) scaleX(0.93);transform-origin:50% 0;">Jeff</div>
<div class="t" style="left:1355.0px;top:256.6px;font-size:17px;color:#333;transform:translateX(-50%) scaleX(0.915);transform-origin:50% 0;">Payxpert Ltd</div>
<div class="t" style="left:1031.8px;top:311.4px;font-size:17px;color:#27b2dd;transform:scaleX(0.913);transform-origin:0 0;">DRAFT2024/002223</div>
<div class="t" style="left:1239.5px;top:311.4px;font-size:17px;color:#333;transform:translateX(-50%) scaleX(0.93);transform-origin:50% 0;">Soft Company</div>
<div class="t" style="left:1355.0px;top:311.4px;font-size:17px;color:#333;transform:translateX(-50%) scaleX(0.915);transform-origin:50% 0;">Payxpert Ltd</div>
<div class="t" style="left:1031.8px;top:366.2px;font-size:17px;color:#27b2dd;transform:scaleX(0.913);transform-origin:0 0;">DRAFT2024/002222</div>
<div class="t" style="left:1239.5px;top:366.2px;font-size:17px;color:#333;transform:translateX(-50%) scaleX(0.93);transform-origin:50% 0;">Jeff</div>
<div class="t" style="left:1355.0px;top:366.2px;font-size:17px;color:#333;transform:translateX(-50%) scaleX(0.915);transform-origin:50% 0;">Payxpert Ltd</div>
<div class="t" style="left:1031.8px;top:421.0px;font-size:17px;color:#27b2dd;transform:scaleX(0.913);transform-origin:0 0;">DRAFT2024/002221</div>
<div class="t" style="left:1239.5px;top:421.0px;font-size:17px;color:#333;transform:translateX(-50%) scaleX(0.93);transform-origin:50% 0;">Soft Company</div>
<div class="t" style="left:1355.0px;top:421.0px;font-size:17px;color:#333;transform:translateX(-50%) scaleX(0.915);transform-origin:50% 0;">Payxpert Ltd</div>
<div class="t" style="left:1031.8px;top:475.8px;font-size:17px;color:#27b2dd;transform:scaleX(0.913);transform-origin:0 0;">DRAFT2024/002220</div>
<div class="t" style="left:1239.5px;top:475.8px;font-size:17px;color:#333;transform:translateX(-50%) scaleX(0.93);transform-origin:50% 0;">Jeff</div>
<div class="t" style="left:1355.0px;top:475.8px;font-size:17px;color:#333;transform:translateX(-50%) scaleX(0.915);transform-origin:50% 0;">Payxpert Ltd</div>
<div class="t" style="left:1031.8px;top:530.5px;font-size:17px;color:#27b2dd;transform:scaleX(0.913);transform-origin:0 0;">DRAFT2024/002219</div>
<div class="t" style="left:1239.5px;top:530.5px;font-size:17px;color:#333;transform:translateX(-50%) scaleX(0.93);transform-origin:50% 0;">Soft Company</div>
<div class="t" style="left:1355.0px;top:530.5px;font-size:17px;color:#333;transform:translateX(-50%) scaleX(0.915);transform-origin:50% 0;">Payxpert Ltd</div>
<div class="t" style="left:1031.8px;top:585.3px;font-size:17px;color:#27b2dd;transform:scaleX(0.913);transform-origin:0 0;">DRAFT2024/002218</div>
<div class="t" style="left:1239.5px;top:585.3px;font-size:17px;color:#333;transform:translateX(-50%) scaleX(0.93);transform-origin:50% 0;">Jeff</div>
<div class="t" style="left:1355.0px;top:585.3px;font-size:17px;color:#333;transform:translateX(-50%) scaleX(0.915);transform-origin:50% 0;">Payxpert Ltd</div>
<div class="t" style="left:1031.8px;top:640.1px;font-size:17px;color:#27b2dd;transform:scaleX(0.913);transform-origin:0 0;">DRAFT2024/002217</div>
<div class="t" style="left:1239.5px;top:640.1px;font-size:17px;color:#333;transform:translateX(-50%) scaleX(0.93);transform-origin:50% 0;">Soft Company</div>
<div class="t" style="left:1355.0px;top:640.1px;font-size:17px;color:#333;transform:translateX(-50%) scaleX(0.915);transform-origin:50% 0;">Payxpert Ltd</div>
<div class="t" style="left:1031.8px;top:694.9px;font-size:17px;color:#27b2dd;transform:scaleX(0.913);transform-origin:0 0;">DRAFT2024/002216</div>
<div class="t" style="left:1239.5px;top:684.4px;font-size:17px;color:#333;transform:translateX(-50%) scaleX(0.93);transform-origin:50% 0;">Reseller</div>
<div class="t" style="left:1239.5px;top:705.0px;font-size:17px;color:#333;transform:translateX(-50%) scaleX(0.93);transform-origin:50% 0;">Company</div>
<div class="t" style="left:1355.0px;top:694.9px;font-size:17px;color:#333;transform:translateX(-50%) scaleX(0.915);transform-origin:50% 0;">Payxpert Ltd</div>
<div class="t" style="left:1031.8px;top:749.7px;font-size:17px;color:#27b2dd;transform:scaleX(0.913);transform-origin:0 0;">DRAFT2024/002215</div>
<div class="t" style="left:1239.5px;top:749.7px;font-size:17px;color:#333;transform:translateX(-50%) scaleX(0.93);transform-origin:50% 0;">Jeff</div>
<div class="t" style="left:1355.0px;top:749.7px;font-size:17px;color:#333;transform:translateX(-50%) scaleX(0.915);transform-origin:50% 0;">Payxpert Ltd</div>
<div class="t" style="left:1054.0px;top:196.1px;font-size:18px;color:#333;font-weight:bold;transform:scaleX(0.935);transform-origin:0 0;">Reference</div>
<div class="t" style="left:1194.0px;top:196.1px;font-size:18px;color:#333;font-weight:bold;transform:scaleX(0.935);transform-origin:0 0;">Company</div>
<div class="t" style="left:1311.0px;top:185.8px;font-size:18px;color:#333;font-weight:bold;transform:scaleX(0.935);transform-origin:0 0;">Payment</div>
<div class="t" style="left:1311.0px;top:206.8px;font-size:18px;color:#333;font-weight:bold;transform:scaleX(0.935);transform-origin:0 0;">Company</div>
<svg style="position:absolute;left:1162px;top:195px;" width="12" height="22" viewBox="0 0 12 22"><path d="M6 2 L10.5 9 L1.5 9 Z M6 20 L10.5 13 L1.5 13 Z" fill="#d6d6d6"/></svg>
<div style="position:absolute;left:1408px;top:175px;width:16px;height:615px;background:#fff"></div>
<div style="position:absolute;left:1023px;top:797px;width:385px;height:18.5px;background:#f8f8f8"></div>
<svg style="position:absolute;left:1030px;top:800px;" width="12" height="13" viewBox="0 0 12 13"><path d="M3 6.5 L9 1 L9 12 Z" fill="#8a8a8a"/></svg>
<svg style="position:absolute;left:1387px;top:800px;" width="12" height="13" viewBox="0 0 12 13"><path d="M10 6.5 L4 1 L4 12 Z" fill="#8a8a8a"/></svg>
<div style="position:absolute;left:1051px;top:801px;width:170px;height:10.799999999999955px;background:#8b8b8b;border-radius:5.4px"></div>
<div class="t" style="left:1023.2px;top:820.2px;font-size:16px;color:#29b3dd;transform:scaleX(0.975);transform-origin:0 0;">View all invoices</div>
<div style="position:absolute;left:1269px;top:63px;width:169px;height:155px;background:#fff;border:1px solid #cbcbcb"></div>
<svg style="position:absolute;left:1282px;top:71.5px;" width="21" height="21" viewBox="0 0 21 21"><circle cx="10.5" cy="10.5" r="10.2" fill="#555"/>
<g fill="none" stroke="#fff" stroke-width="1.3"><ellipse cx="10.5" cy="10.5" rx="4.0" ry="10.2"/>
<line x1="0" y1="6.3" x2="21" y2="6.3"/><line x1="0" y1="14.5" x2="21" y2="14.5"/></g></svg>
<div class="t" style="left:1311.6px;top:75.1px;font-size:16px;color:#555;transform:scaleX(0.985);transform-origin:0 0;">Europe/Madrid</div>
<svg style="position:absolute;left:1284px;top:114px;" width="16" height="13" viewBox="0 0 16 13"><rect width="16" height="13" fill="#3b4fa0"/>
<path d="M0 0 L16 13 M16 0 L0 13" stroke="#fff" stroke-width="2.6"/>
<path d="M0 0 L16 13 M16 0 L0 13" stroke="#d33" stroke-width="0.9"/>
<rect x="6" y="0" width="4" height="13" fill="#fff"/><rect x="0" y="4.5" width="16" height="4" fill="#fff"/>
<rect x="6.8" y="0" width="2.4" height="13" fill="#d22"/><rect x="0" y="5.3" width="16" height="2.4" fill="#d22"/></svg>
<div class="t" style="left:1312.6px;top:114.1px;font-size:16px;color:#555;transform:scaleX(0.935);transform-origin:0 0;">English</div>
<svg style="position:absolute;left:1283px;top:147px;" width="19" height="22" viewBox="0 0 19 22"><circle cx="9.5" cy="5.6" r="5.6" fill="#555"/><path d="M0.5 21.5 L0.5 18 Q0.5 12.6 6 12.6 L13 12.6 Q18.5 12.6 18.5 18 L18.5 21.5 Z" fill="#555"/></svg>
<div class="t" style="left:1311.6px;top:152.3px;font-size:16px;color:#555;transform:scaleX(0.98);transform-origin:0 0;">My profile</div>
<svg style="position:absolute;left:1281px;top:188px;" width="22" height="16" viewBox="0 0 22 16"><path d="M7.5 1.2 L3.5 1.2 Q1.2 1.2 1.2 3.5 L1.2 12.5 Q1.2 14.8 3.5 14.8 L7.5 14.8" fill="none" stroke="#555" stroke-width="2.4"/><path d="M6.5 5.3 L12.5 5.3 L12.5 1 L21.2 8 L12.5 15 L12.5 10.7 L6.5 10.7 Z" fill="#555"/></svg>
<div class="t" style="left:1311.6px;top:190.1px;font-size:16px;color:#555;transform:scaleX(0.98);transform-origin:0 0;">Logout</div>
<div style="position:absolute;left:1393px;top:16px;width:45px;height:45px;border-radius:50%;background:radial-gradient(circle at 50% 55%,#2ea3cf 0%,#2193c3 55%,#1a80b2 100%)"></div>
<div class="t" style="left:1415.5px;top:31.1px;font-size:16px;color:#fff;transform:translateX(-50%) scaleX(0.97);transform-origin:50% 0;">TM</div>
<svg style="position:absolute;left:1410px;top:55px;" width="20" height="9" viewBox="0 0 20 9"><path d="M1.3 8.5 L9.3 1.2 L17.3 8.5" fill="#fff" stroke="#d5d5d5" stroke-width="1"/><rect x="0" y="8.1" width="20" height="2" fill="#fff"/></svg>
<div style="position:absolute;left:1228px;top:7px;width:226px;height:218px;border:7px solid #5ea227;box-sizing:border-box"></div>
<svg style="position:absolute;left:1421.5px;top:53px;" width="22" height="34" viewBox="0 0 22 34"><path d="M6.5 3.5 Q6.5 1.5 8.3 1.5 Q10 1.5 10 3.5 L10 13.5 L10.5 9.8 Q12.5 8.8 13.8 10 L14 13.8 L14.6 11 Q16.5 10.2 17.6 11.5 L17.8 14.8 L18.4 12.6 Q20.3 12 20.8 13.8 L20.8 22 Q20.8 28 17.8 31 L9.5 31 Q7.5 28 4.3 24 L1.6 20.6 Q0.8 18.8 2.6 18 Q4.2 17.5 5.5 19 L6.5 20.2 Z" fill="#fff" stroke="#222" stroke-width="1.3" stroke-linejoin="round"/>
<path d="M10 13.5 L10 18 M14 13.8 L14 18 M17.8 14.8 L17.8 18" stroke="#222" stroke-width="1"/></svg>
<svg style="position:absolute;left:1477.5px;top:11.2px;" width="30" height="30" viewBox="0 0 30 30"><circle cx="12.5" cy="11" r="7" fill="#20557a" stroke="#bdbdbd" stroke-width="2.2"/>
<circle cx="12" cy="9.8" r="3.5" fill="#3f7fb0" fill-opacity="0.6"/>
<path d="M18.2 16.8 L24 22.5" stroke="#c03ad8" stroke-width="3.6" stroke-linecap="round"/></svg>
<svg style="position:absolute;left:1482px;top:63px;" width="23" height="25" viewBox="0 0 23 25"><defs>
<linearGradient id="mA" x1="0" y1="0" x2="1" y2="0.5"><stop offset="0" stop-color="#3d7fe4"/><stop offset="1" stop-color="#46d2f2"/></linearGradient>
<linearGradient id="mB" x1="0" y1="0" x2="0" y2="1"><stop offset="0" stop-color="#9a66dc"/><stop offset="1" stop-color="#4f7ae4"/></linearGradient>
<linearGradient id="mC" x1="0" y1="0" x2="1" y2="0"><stop offset="0" stop-color="#c884e8"/><stop offset="1" stop-color="#8452cc"/></linearGradient>
<clipPath id="hx"><path d="M10 1.4 Q11.5 0.6 13 1.4 L20.4 5.7 Q21.8 6.5 21.8 8.2 L21.8 16.8 Q21.8 18.5 20.4 19.3 L13 23.6 Q11.5 24.4 10 23.6 L2.6 19.3 Q1.2 18.5 1.2 16.8 L1.2 8.2 Q1.2 6.5 2.6 5.7 Z"/></clipPath></defs>
<g clip-path="url(#hx)">
<path d="M11.5 12.5 L6 2 L23 2 L23 15 Z" fill="url(#mA)"/>
<path d="M11.5 12.5 L6 2 L0 2 L0 24 L8 24 Z" fill="url(#mB)"/>
<path d="M11.5 12.5 L8 24 L23 24 L23 15 Z" fill="url(#mC)"/>
</g>
<path d="M9 8.6 Q12.5 8 15 10.6 L15.6 13.8 Q13.5 16.8 9.6 16 Q7.6 13 9 8.6 Z" fill="#3b3b3b"/>
</svg>
<svg style="position:absolute;left:1482px;top:114px;" width="24" height="24" viewBox="0 0 24 24"><rect x="4" y="1.3" width="17" height="20.4" rx="1.2" fill="#1a8fe3"/>
<rect x="9" y="1.3" width="12" height="8" fill="#40c2f5"/>
<path d="M4 11 L21 11 L21 20.5 Q21 21.7 19.8 21.7 L5.2 21.7 Q4 21.7 4 20.5 Z" fill="#24a4ec"/>
<path d="M4 11 L12.5 16.5 L21 11" fill="none" stroke="#1677c8" stroke-width="1"/>
<rect x="1.3" y="5.2" width="12.7" height="13.1" rx="1.3" fill="#0b69c4"/>
<ellipse cx="7.6" cy="11.75" rx="3.3" ry="3.6" fill="none" stroke="#fff" stroke-width="1.8"/></svg>
<svg style="position:absolute;left:1484px;top:170px;" width="18" height="18" viewBox="0 0 18 18"><path d="M9 1.5 V16.5 M1.5 9 H16.5" stroke="#c4c4c4" stroke-width="1.6"/></svg>
</body></html>
